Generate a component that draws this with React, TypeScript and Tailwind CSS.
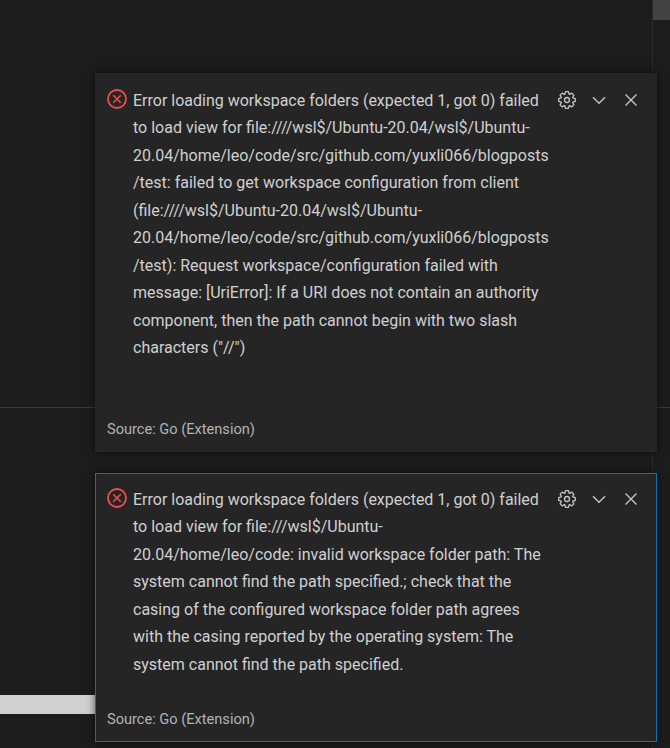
const firstLines = [
  "Error loading workspace folders (expected 1, got 0) failed",
  "to load view for file:////wsl$/Ubuntu-20.04/wsl$/Ubuntu-",
  "20.04/home/leo/code/src/github.com/yuxli066/blogposts",
  "/test: failed to get workspace configuration from client",
  "(file:////wsl$/Ubuntu-20.04/wsl$/Ubuntu-",
  "20.04/home/leo/code/src/github.com/yuxli066/blogposts",
  "/test): Request workspace/configuration failed with",
  "message: [UriError]: If a URI does not contain an authority",
  "component, then the path cannot begin with two slash",
  'characters ("//")',
];

const secondLines = [
  "Error loading workspace folders (expected 1, got 0) failed",
  "to load view for file:///wsl$/Ubuntu-",
  "20.04/home/leo/code: invalid workspace folder path: The",
  "system cannot find the path specified.; check that the",
  "casing of the configured workspace folder path agrees",
  "with the casing reported by the operating system: The",
  "system cannot find the path specified.",
];

function ErrorIcon() {
  return (
    <svg width="21" height="21" viewBox="0 0 21 21" fill="none" stroke="#f14c4c" className="shrink-0">
      <circle cx="10" cy="10" r="9" strokeWidth="1.8" />
      <path d="M6.2 6.2l7.6 7.6M13.8 6.2l-7.6 7.6" strokeWidth="1.6" />
    </svg>
  );
}

// eight toothed cog, same as the codicon settings gear
function gearPath() {
  const c = 9;
  let d = "";
  for (let i = 0; i < 8; i++) {
    const a = (i * Math.PI) / 4 - Math.PI / 2;
    const pts: [number, number][] = [
      [6.2, a - 0.36],
      [8.4, a - 0.17],
      [8.4, a + 0.17],
      [6.2, a + 0.36],
    ];
    for (const [r, t] of pts) {
      const x = (c + r * Math.cos(t)).toFixed(2);
      const y = (c + r * Math.sin(t)).toFixed(2);
      d += `${d ? "L" : "M"}${x} ${y}`;
    }
  }
  return d + "Z";
}

function GearIcon() {
  return (
    <svg width="18" height="18" viewBox="0 0 18 18" fill="none" stroke="#c5c5c5" strokeWidth="1.3">
      <path d={gearPath()} strokeLinejoin="round" />
      <circle cx="9" cy="9" r="2.5" />
    </svg>
  );
}

function Notification({
  lines,
  bodyClass,
  focused,
}: {
  lines: string[];
  bodyClass: string;
  focused?: boolean;
}) {
  return (
    <div
      className={`relative w-[562px] bg-[#252526] pb-[13px] shadow-[0_0_8px_rgba(0,0,0,0.6)] ${
        focused ? "outline outline-1 -outline-offset-1 outline-[#0e70b8]" : ""
      }`}
    >
      <div className={`flex pl-3 pr-[13px] ${bodyClass}`}>
        <div className="w-[26px] shrink-0 pt-[3px]">
          <ErrorIcon />
        </div>
        <div className="w-[418px] shrink-0 whitespace-nowrap pt-px text-[16px] leading-[27.45px] text-[#d0d0d0]">
          {lines.map((line) => (
            <div key={line}>{line}</div>
          ))}
        </div>
        <div className="flex h-[27px] items-center gap-[14px] pl-[7px]">
          <GearIcon />
          <svg width="18" height="18" viewBox="0 0 18 18" fill="none" stroke="#c5c5c5" strokeWidth="1.4">
            <path d="M3 6.2l6 6 6-6" />
          </svg>
          <svg width="18" height="18" viewBox="0 0 18 18" fill="none" stroke="#c5c5c5" strokeWidth="1.4">
            <path d="M3.5 3.5l11 11M14.5 3.5l-11 11" />
          </svg>
        </div>
      </div>
      <div className="pl-3 text-[14.6px] leading-[20px] text-[#b3b3b3]">Source: Go (Extension)</div>
    </div>
  );
}

export default function App() {
  return (
    <div
      className="relative h-[748px] w-[670px] overflow-hidden bg-[#1c1c1c]"
      style={{ fontFamily: 'Roboto, "Noto Sans", sans-serif' }}
    >
      {/* editor chrome behind the toasts */}
      <div className="absolute right-0 top-0 h-[20px] w-[17px] bg-[#434343]" />
      <div className="absolute bottom-0 right-[17px] top-0 w-px bg-[#2a2a2a]" />
      <div className="absolute left-0 right-0 top-[407px] h-px bg-[#3a3a3a]" />
      <div className="absolute left-0 top-[695px] h-[19px] w-[96px] bg-[#d0d0d0]" />

      <div className="relative flex flex-col gap-[21px] pl-[95px] pt-[73px]">
        <Notification lines={firstLines} bodyClass="h-[346px] pt-[13px]" />
        <Notification lines={secondLines} bodyClass="h-[236px] pt-[12px]" focused />
      </div>
    </div>
  );
}
